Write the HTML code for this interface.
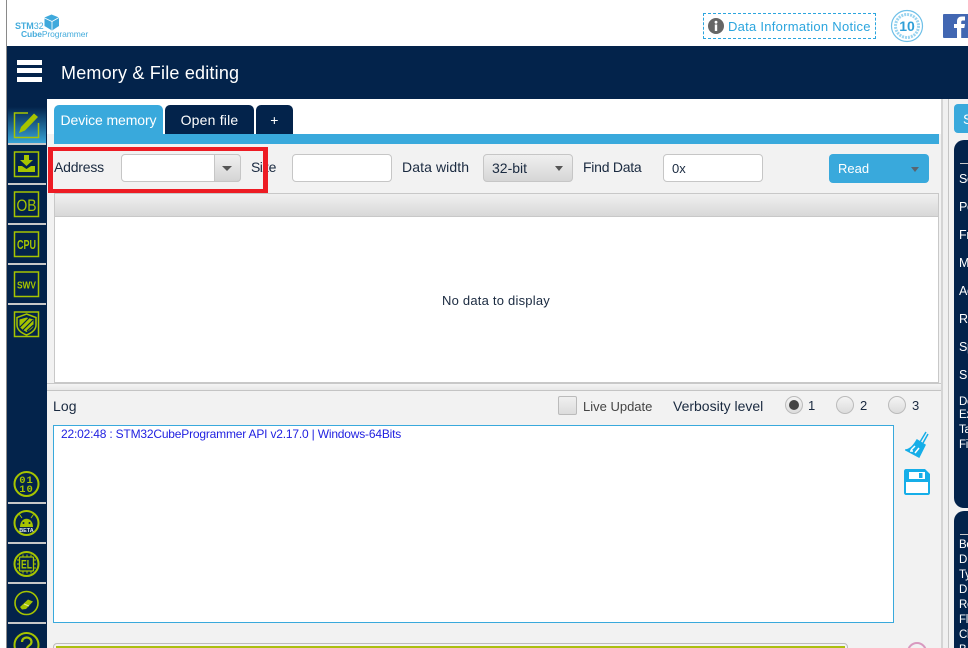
<!DOCTYPE html>
<html><head><meta charset="utf-8">
<style>
html,body{margin:0;padding:0;width:968px;height:648px;overflow:hidden;background:#f2f2f2}
body{position:relative;font-family:"Liberation Sans",sans-serif;font-size:14px;color:#1a2a40}
.a{position:absolute;box-sizing:border-box}
.t{position:absolute;white-space:nowrap;line-height:16px}
.sep{position:absolute;left:8px;width:38px;height:2px;background:#c8c8c8}
.inp{position:absolute;box-sizing:border-box;background:#fff;border:1px solid #c6c6c6;border-radius:4px;height:28px;top:154px}
.radio{position:absolute;box-sizing:border-box;width:18px;height:18px;top:396px;border-radius:50%;border:1px solid #bbb;background:linear-gradient(#f4f4f4,#dcdcdc)}
.tab{position:absolute;top:105px;height:30px;border-radius:5px 5px 0 0;background:#03234b;color:#fff;text-align:center;line-height:30px;letter-spacing:.2px}
.w{color:#fff}
.r1{font-size:12.500px;letter-spacing:-.3px;left:959px}
.r2{font-size:11.500px;letter-spacing:-.3px;left:959px}
</style></head><body>
<div class="a" style="left:0;top:0;width:968px;height:46px;background:#fff"></div>
<div class="a" style="left:0;top:0;width:6px;height:648px;background:#fff"></div>
<div class="a" style="left:6px;top:0;width:1px;height:648px;background:#8a8a8a"></div>

<!-- logo -->
<div class="t" style="left:15px;top:21px;font-size:9px;line-height:11px;font-weight:bold;color:#45acdc;letter-spacing:-.1px">STM<span style="font-weight:normal">32</span></div>
<div class="t" style="left:21px;top:29px;font-size:8.500px;line-height:11px;color:#45acdc;letter-spacing:-.1px"><b>Cube</b>Programmer</div>
<svg class="a" style="left:43px;top:14px" width="17" height="17" viewBox="0 0 17 17"><path d="M8.500 0.500L16 3.500V12L9 16.500L1.500 12V3.500Z" fill="#3fa9dc"/><path d="M1.500 4L9 7.500L16 3.500M9 7.500V16" stroke="#fff" stroke-width=".8" fill="none"/></svg>

<!-- notice -->
<div class="a" style="left:703px;top:13px;width:173px;height:26px;border:1px dashed #2ba5de"></div>
<svg class="a" style="left:708px;top:18px" width="16" height="16" viewBox="0 0 16 16"><circle cx="8" cy="8" r="8" fill="#666"/><rect x="6.800" y="6.500" width="2.400" height="6.500" fill="#fff"/><circle cx="8" cy="4.200" r="1.400" fill="#fff"/></svg>
<div class="t" style="left:728px;top:19px;font-size:13px;letter-spacing:.27px;color:#2ba5de">Data Information Notice</div>
<svg class="a" style="left:890px;top:9px" width="34" height="34" viewBox="0 0 34 34"><circle cx="17" cy="17" r="15.500" fill="none" stroke="#6fc0e8" stroke-width="1.200"/><circle cx="17" cy="17" r="11.500" fill="none" stroke="#9ad4f0" stroke-width="3" stroke-dasharray="2 1"/><text x="17" y="22" text-anchor="middle" font-size="14" font-weight="bold" font-family="Liberation Sans" fill="#2f9fd8">10</text></svg>
<div class="a" style="left:943px;top:14px;width:25px;height:24px;background:#4267b2;border-radius:1px 0 0 1px"></div>
<svg class="a" style="left:943px;top:14px" width="25" height="24" viewBox="0 0 25 24"><path d="M14 24V14H11V10H14V7.500C14 4 16 2.500 19 2.500H22V6.500H19.800C18.500 6.500 18.200 7.200 18.200 8.200V10H22L21.300 14H18.200V24Z" fill="#fff"/></svg>

<!-- header -->
<div class="a" style="left:7px;top:46px;width:961px;height:53px;background:#03234b"></div>
<div class="a" style="left:17px;top:60px;width:25px;height:5px;background:#fff"></div>
<div class="a" style="left:17px;top:68px;width:25px;height:5px;background:#fff"></div>
<div class="a" style="left:17px;top:77px;width:25px;height:5px;background:#fff"></div>
<div class="t" style="left:61px;top:62px;font-size:18px;line-height:22px;color:#fff;letter-spacing:.2px">Memory &amp; File editing</div>

<!-- sidebar -->
<div class="a" style="left:7px;top:99px;width:40px;height:549px;background:#03234b"></div>
<div class="a" style="left:8px;top:107px;width:38px;height:36px;background:linear-gradient(#03234b,#37a3d6)"></div>
<div class="sep" style="top:143px"></div><div class="sep" style="top:183px"></div><div class="sep" style="top:223px"></div><div class="sep" style="top:263px"></div><div class="sep" style="top:303px"></div>
<div class="sep" style="top:502px"></div><div class="sep" style="top:542px"></div><div class="sep" style="top:582px"></div><div class="sep" style="top:622px"></div>

<svg class="a" style="left:7px;top:99px" width="40" height="549" viewBox="0 0 40 549" fill="none" stroke="#a6c400" font-family="Liberation Sans">
<path d="M21 14H7.500V38.500H31.500V24" stroke-width="1.500"/>
<path d="M12 34L14 28L27 14.500L31 18L18 31.500Z" fill="#a6c400" stroke="none"/>
<rect x="7.500" y="53" width="24" height="24.500" stroke-width="1.500"/>
<path d="M17 56H22V61H26L19.500 67L13 61H17Z M11 67H15L19.500 70L24 67H28V73H11Z" fill="#a6c400" stroke="none"/>
<rect x="7.500" y="93" width="24" height="24.500" stroke-width="1.500"/>
<text x="19.500" y="112" text-anchor="middle" font-size="17" textLength="20" lengthAdjust="spacingAndGlyphs" fill="#a6c400" stroke="none">OB</text>
<rect x="7.500" y="133" width="24" height="24.500" stroke-width="1.500"/>
<text x="19.500" y="150" text-anchor="middle" font-size="13" font-weight="bold" textLength="19" lengthAdjust="spacingAndGlyphs" fill="#a6c400" stroke="none">CPU</text>
<rect x="7.500" y="173" width="24" height="24.500" stroke-width="1.500"/>
<text x="19.500" y="189.500" text-anchor="middle" font-size="10.500" font-weight="bold" textLength="19" lengthAdjust="spacingAndGlyphs" fill="#a6c400" stroke="none">SWV</text>
<rect x="7.500" y="213" width="24" height="24.500" stroke-width="1.500"/>
<path d="M19.500 215L29 218.500V226C29 231 24.500 234 19.500 236C14.500 234 10 231 10 226V218.500Z" stroke-width="1.500"/>
<path d="M19.500 218.500L26.500 220.500V226C26.500 229 23 231 19.500 233C16 231 12.500 229 12.500 226V220.500Z" fill="#a6c400" stroke="none"/>
<path d="M13 228L22 219M16 231L26 221M20 232L26.500 226" stroke="#03234b" stroke-width="1.200"/>
<circle cx="19.500" cy="385" r="12" stroke-width="2"/>
<text x="19.500" y="384" text-anchor="middle" font-size="10.500" font-weight="bold" font-family="Liberation Mono" letter-spacing="1" fill="#a6c400" stroke="none">01</text>
<text x="19.500" y="393" text-anchor="middle" font-size="10.500" font-weight="bold" font-family="Liberation Mono" letter-spacing="1" fill="#a6c400" stroke="none">10</text>
<circle cx="19.500" cy="424" r="12" stroke-width="2"/>
<path d="M13 428C13 417 26 417 26 428Z" fill="#a6c400" stroke="none"/>
<path d="M15 419L12.500 415.500M24 419L26.500 415.500" stroke-width="1"/>
<circle cx="16.500" cy="424" r="1" fill="#03234b" stroke="none"/><circle cx="22.500" cy="424" r="1" fill="#03234b" stroke="none"/>
<text x="19.500" y="433" text-anchor="middle" font-size="5.500" font-weight="bold" fill="#dfe6ea" stroke="none">BETA</text>
<circle cx="19.500" cy="465" r="12" stroke-width="2"/>
<rect x="12.500" y="458" width="14" height="14" rx="1" stroke-width="1.300"/>
<path d="M10 461H12M10 465H12M10 469H12M27 461H29M27 465H29M27 469H29M16 455.500V457.500M20 455.500V457.500M24 455.500V457.500M16 472.500V474.500M20 472.500V474.500M24 472.500V474.500" stroke-width="1"/>
<text x="19.500" y="469.500" text-anchor="middle" font-size="12" font-weight="bold" textLength="11" lengthAdjust="spacingAndGlyphs" fill="#a6c400" stroke="none">EL</text>
<circle cx="19.500" cy="504" r="11.500" stroke-width="1.600"/>
<path d="M13 508L21 500.500L26 502.500L19 510L15 510.500Z" fill="#a6c400" stroke="none"/>
<path d="M17 505L22 507" stroke="#dfe6a0" stroke-width="1"/>
<circle cx="19.500" cy="546" r="12" stroke-width="2"/>
<path d="M15 543C15 537 24.500 537 24.500 543C24.500 547 19.500 546 19.500 551" stroke-width="2.200"/>
</svg>

<!-- main white top -->
<div class="a" style="left:47px;top:99px;width:894px;height:35px;background:#fff"></div>
<div class="tab" style="left:54px;width:109px;background:#39a9dc;letter-spacing:-.1px">Device memory</div>
<div class="tab" style="left:165px;width:89px">Open file</div>
<div class="tab" style="left:256px;width:37px">+</div>
<div class="a" style="left:54px;top:134px;width:885px;height:10px;background:#39a9dc"></div>

<!-- toolbar -->
<div class="t" style="left:54px;top:159px;letter-spacing:-.2px">Address</div>
<div class="inp" style="left:121px;width:120px"></div>
<div class="a" style="left:214px;top:154px;width:27px;height:28px;border:1px solid #c6c6c6;border-radius:0 4px 4px 0;background:linear-gradient(#f0f0f0,#d4d4d4)"></div>
<div class="a" style="left:222px;top:166px;width:0;height:0;border:5px solid transparent;border-top:5px solid #555;border-bottom:0"></div>
<div class="t" style="left:251px;top:159px;letter-spacing:-.6px">Size</div>
<div class="inp" style="left:292px;width:100px"></div>
<div class="t" style="left:402px;top:159px;letter-spacing:.1px">Data width</div>
<div class="inp" style="left:483px;width:90px;background:linear-gradient(#efefef,#d6d6d6)"></div>
<div class="t" style="left:492px;top:160px;letter-spacing:0">32-bit</div>
<div class="a" style="left:555px;top:166px;width:0;height:0;border:4.500px solid transparent;border-top:5px solid #555;border-bottom:0"></div>
<div class="t" style="left:583px;top:159px;letter-spacing:-.25px">Find Data</div>
<div class="inp" style="left:663px;width:100px"></div>
<div class="t" style="left:672px;top:161px;font-size:13px">0x</div>
<div class="a" style="left:829px;top:154px;width:100px;height:29px;background:#39a9dc;border-radius:4px"></div>
<div class="t w" style="left:838px;top:161px;font-size:13px">Read</div>
<div class="a" style="left:911px;top:167px;width:0;height:0;border:4px solid transparent;border-top:5px solid #5a6570;border-bottom:0"></div>

<!-- table -->
<div class="a" style="left:54px;top:193px;width:885px;height:190px;border:1px solid #c8c8c8;background:#fff"></div>
<div class="a" style="left:55px;top:194px;width:883px;height:23px;background:linear-gradient(#f0f0f0,#d8d8d8);border-bottom:1px solid #c8c8c8"></div>
<div class="t" style="left:442px;top:293px;font-size:13px;letter-spacing:.22px">No data to display</div>
<div class="a" style="left:47px;top:383px;width:894px;height:8px;background:linear-gradient(#c8c8c8 1px,#f4f4f4 1px,#e8e8e8);border-bottom:1px solid #c4c4c4"></div>

<!-- red box -->
<div class="a" style="left:48px;top:147px;width:220px;height:46px;border:5px solid #ed1c24;border-width:4px 5px 4px 5px"></div>

<!-- log -->
<div class="t" style="left:53px;top:398px;letter-spacing:.1px">Log</div>
<div class="a" style="left:558px;top:396px;width:19px;height:19px;border:1px solid #bbb;border-radius:2px;background:linear-gradient(#f0f0f0,#dcdcdc)"></div>
<div class="t" style="left:583px;top:399px;font-size:13px;color:#444">Live Update</div>
<div class="t" style="left:673px;top:398px;letter-spacing:0">Verbosity level</div>
<div class="radio" style="left:785px"></div>
<div class="a" style="left:789px;top:400px;width:10px;height:10px;border-radius:50%;background:#444"></div>
<div class="t" style="left:808px;top:398px;font-size:13px">1</div>
<div class="radio" style="left:836px"></div>
<div class="t" style="left:860px;top:398px;font-size:13px">2</div>
<div class="radio" style="left:888px"></div>
<div class="t" style="left:912px;top:398px;font-size:13px">3</div>

<div class="a" style="left:53px;top:425px;width:841px;height:198px;background:#fff;border:1px solid #39a9dc"></div>
<div class="t" style="left:61px;top:426px;font-size:12px;color:#1f1fe0;letter-spacing:-.19px">22:02:48 : STM32CubeProgrammer API v2.17.0 | Windows-64Bits</div>

<svg class="a" style="left:905px;top:431px" width="24" height="27" viewBox="0 0 24 27" fill="none" stroke="#16aee8" stroke-width="1.500"><path d="M15 11L21 1M18 12L23 3"/><path d="M12 9L20 14L14 26L1 19C6 18 9 14 12 9Z" fill="#16aee8"/><path d="M6 19L10 15M10 22L14 17M5 20H8" stroke="#fff" stroke-width="1.500"/></svg>
<svg class="a" style="left:904px;top:469px" width="26" height="26" viewBox="0 0 26 26"><path d="M2 0H21L26 5V24C26 25 25 26 24 26H2C1 26 0 25 0 24V2C0 1 1 0 2 0Z" fill="#16aee8"/><rect x="5" y="3" width="16" height="7" fill="#fff"/><rect x="15" y="4" width="3.500" height="5" fill="#16aee8"/><rect x="2" y="13" width="22" height="11" fill="#fff"/></svg>

<!-- progress -->
<div class="a" style="left:53px;top:643px;width:795px;height:20px;border:1px solid #bdbdbd;border-radius:4px;background:#f2f2f2"></div>
<div class="a" style="left:56px;top:646px;width:789px;height:10px;background:#acbf10"></div>
<div class="a" style="left:907px;top:642px;width:20px;height:20px;border:2px solid #d99ac0;border-radius:50%"></div>

<!-- right panel -->
<div class="a" style="left:941px;top:99px;width:2px;height:549px;background:#d4d4d4"></div>
<div class="a" style="left:943px;top:99px;width:5px;height:549px;background:#f0f0f0"></div>
<div class="a" style="left:948px;top:99px;width:1px;height:549px;background:#c4c4c4"></div>
<div class="a" style="left:954px;top:104px;width:14px;height:29px;background:#39a9dc;border-radius:4px 0 0 4px"></div>
<div class="t w" style="left:963px;top:111px">S</div>
<div class="a" style="left:954px;top:140px;width:14px;height:368px;background:#03234b;border-radius:10px 0 0 10px"></div>
<div class="a" style="left:960px;top:163px;width:8px;height:1px;background:#c8c8c8"></div>
<div class="t w r1" style="top:171px">Se</div>
<div class="t w r1" style="top:199px">Po</div>
<div class="t w r1" style="top:227px">Fr</div>
<div class="t w r1" style="top:255px">M</div>
<div class="t w r1" style="top:283px">Ac</div>
<div class="t w r1" style="top:311px">Re</div>
<div class="t w r1" style="top:339px">Sp</div>
<div class="t w r1" style="top:367px">SI</div>
<div class="t w r2" style="top:394px">De</div>
<div class="t w r2" style="top:407px">Ex</div>
<div class="t w r2" style="top:422px">Ta</div>
<div class="t w r2" style="top:437px">Fi</div>
<div class="a" style="left:954px;top:511px;width:14px;height:137px;background:#03234b;border-radius:10px 0 0 0"></div>
<div class="a" style="left:960px;top:534px;width:8px;height:1px;background:#c8c8c8"></div>
<div class="t w r2" style="top:537px">Bo</div>
<div class="t w r2" style="top:552px">D</div>
<div class="t w r2" style="top:567px">Ty</div>
<div class="t w r2" style="top:582px">D</div>
<div class="t w r2" style="top:597px">Re</div>
<div class="t w r2" style="top:612px">Fl</div>
<div class="t w r2" style="top:627px">Cl</div>
<div class="t w r2" style="top:642px">B</div>
</body></html>
